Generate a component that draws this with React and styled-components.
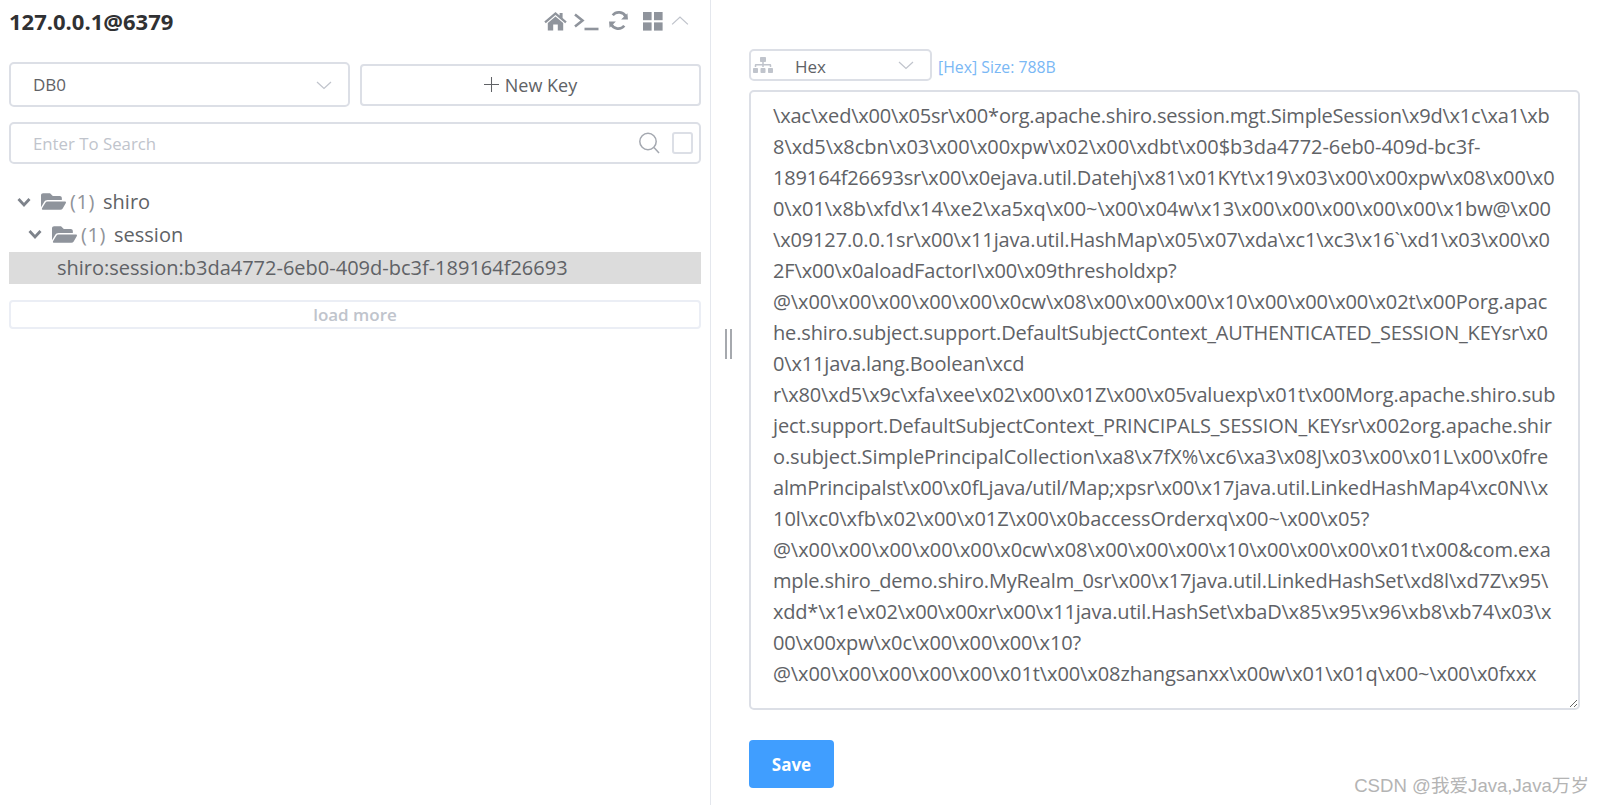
import React from "react";
import styled, { createGlobalStyle } from "styled-components";
import { FaFolderOpen, FaSitemap } from "react-icons/fa";

const Global = createGlobalStyle`
  html, body { margin: 0; padding: 0; background: #fff; }
  body { font-family: "Open Sans", "Noto Sans", sans-serif; overflow: hidden; }
`;

const Page = styled.div`
  position: relative;
  display: flex;
  width: 1602px;
  height: 805px;
  overflow: hidden;
  color: #606266;
`;
const Aside = styled.aside`
  position: relative;
  box-sizing: border-box;
  width: 711px;
  height: 805px;
  padding: 0 9px 0 9px;
  border-right: 1px solid #e4e7ed;
`;
const Handle = styled.div`
  position: absolute;
  right: -22px;
  top: 329px;
  width: 3px;
  height: 30px;
  border-left: 2px solid #a6a9ae;
  border-right: 2px solid #a6a9ae;
  background: #fff;
`;
const Header = styled.header`
  display: flex;
  align-items: center;
  justify-content: space-between;
  height: 43px;
`;
const Title = styled.h1`
  margin: 0 0 2px;
  font-size: 22px;
  font-weight: 700;
  color: #303133;
`;
const Tools = styled.div`
  display: flex;
  align-items: center;
  padding-right: 12px;
  margin-bottom: 2px;
  color: #8f949c;
`;
const Tool = styled.span`
  display: flex;
  margin-left: ${(p) => p.$gap || 0}px;
`;
const Row = styled.div`
  display: grid;
  grid-template-columns: 1fr 1fr;
  gap: 10px;
  align-items: center;
  margin-top: 19px;
`;
const Select = styled.div`
  box-sizing: border-box;
  width: ${(p) => p.$width || "auto"};
  height: ${(p) => p.$height};
  display: flex;
  align-items: center;
  padding: 0 16px 0 22px;
  justify-content: space-between;
  border: 2px solid #dcdfe6;
  border-radius: 5px;
  font-size: 17px;
  color: #606266;
`;
const NewKey = styled.div`
  box-sizing: border-box;
  height: 42px;
  display: flex;
  align-items: center;
  justify-content: center;
  gap: 6px;
  border: 2px solid #dcdfe6;
  border-radius: 4px;
  font-size: 18px;
  font-weight: 500;
  color: #606266;
`;
const Search = styled.div`
  box-sizing: border-box;
  height: 42px;
  margin-top: 15px;
  display: flex;
  align-items: center;
  gap: 11px;
  padding: 0 6px 0 22px;
  border: 2px solid #dcdfe6;
  border-radius: 5px;
`;
const Placeholder = styled.span`
  flex: 1;
  font-size: 16.8px;
  color: #c0c4cc;
`;
const CheckBox = styled.span`
  width: 17px;
  height: 18px;
  border: 2px solid #dcdfe6;
  border-radius: 3px;
`;
const Tree = styled.div`
  margin-top: 21px;
`;
const TreeRow = styled.div`
  box-sizing: border-box;
  display: flex;
  align-items: center;
  height: ${(p) => p.$h}px;
  padding-left: ${(p) => p.$indent}px;
  padding-bottom: ${(p) => p.$lift || 0}px;
  font-size: 20px;
  color: #606266;
  background: ${(p) => (p.$active ? "#dcdcdc" : "transparent")};
`;
const Count = styled.span`
  color: #909399;
  margin: 0 8px 0 4px;
  letter-spacing: 0.6px;
`;
const Folder = styled(FaFolderOpen)`
  color: #8f949c;
  font-size: 25px;
  margin-left: 10px;
`;
const LoadMore = styled.div`
  box-sizing: border-box;
  height: 29px;
  margin-top: 16px;
  display: flex;
  align-items: center;
  justify-content: center;
  border: 2px solid #ebeef5;
  border-radius: 4px;
  font-size: 17px;
  font-weight: 600;
  color: #c0c4cc;
`;
const Main = styled.main`
  box-sizing: border-box;
  flex: 1;
  padding: 49px 22px 0 38px;
`;
const TypeRow = styled.div`
  display: flex;
  align-items: center;
  gap: 6px;
  height: 32px;
`;
const TypeIcon = styled(FaSitemap)`
  color: #c0c4cc;
  font-size: 20px;
  margin-left: -20px;
`;
const TypeText = styled.span`
  flex: 1;
  margin-left: 22px;
  padding-top: 2px;
`;
const Size = styled.span`
  padding-top: 3px;
  font-size: 15.8px;
  color: #7ab8f5;
`;
const Value = styled.div`
  box-sizing: border-box;
  height: 620px;
  margin-top: 9px;
  padding: 8px 10px 0 22px;
  border: 2px solid #dcdfe6;
  border-radius: 5px;
  overflow: auto;
  resize: vertical;
  font-size: 20px;
  line-height: 31px;
  color: #606266;
`;
const Line = styled.div`
  white-space: pre;
  letter-spacing: ${(p) => p.$ls}px;
`;
const Save = styled.button`
  display: block;
  width: 85px;
  height: 48px;
  margin-top: 30px;
  border: 0;
  border-radius: 4px;
  background: #409eff;
  color: #fff;
  font: 700 17px "Open Sans", sans-serif;
`;
const Watermark = styled.div`
  position: absolute;
  right: 13px;
  bottom: 8px;
  font-family: "Liberation Sans", "Noto Sans CJK SC", sans-serif;
  font-size: 18.6px;
  color: #b4b4b4;
`;

const Chevron = ({ up, size = 16, color = "#c0c4cc", w = 1.2 }) => (
  <svg width={size} height={size} viewBox="0 0 16 16" fill="none" stroke={color} strokeWidth={w}>
    <path d={up ? "M1 11 8 4.5 15 11" : "M1 5 8 11.5 15 5"} />
  </svg>
);
const Home = () => (
  <svg width="23" height="20" viewBox="0 0 23 20" fill="#8f949c">
    <path d="M11.5 1 0.3 10.4 1.8 12.2 11.5 4.1 21.2 12.2 22.7 10.4 18.6 7V2H15.6V4.5Z" />
    <path d="M11.5 5.6 3.8 12V19.5H9.2V13.6H13.8V19.5H19.2V12Z" />
  </svg>
);
const Terminal = () => (
  <svg width="25" height="20" viewBox="0 0 25 20" fill="none" stroke="#8f949c" strokeWidth="2.6">
    <path d="M1 3.5 8.5 9.5 1 15.5" />
    <path d="M10.5 18H24.5" />
  </svg>
);
const Refresh = () => (
  <svg width="21" height="21" viewBox="0 0 20 20" fill="none" stroke="#8f949c" strokeWidth="2.6">
    <path d="M3 13.5A7.5 7.5 0 0 0 15.5 15" />
    <path d="M17 6.5A7.5 7.5 0 0 0 4.5 5" />
    <path d="M1 11h6.5L1.5 17z M19 9h-6.5l6-6z" fill="#8f949c" stroke="none" />
  </svg>
);
const Grid = () => (
  <svg width="20" height="20" viewBox="0 0 20 20" fill="#8f949c">
    <rect x="0" y="1" width="8.6" height="8.2" />
    <rect x="11" y="1" width="8.6" height="8.2" />
    <rect x="0" y="11.4" width="8.6" height="8.2" />
    <rect x="11" y="11.4" width="8.6" height="8.2" />
  </svg>
);
const Magnifier = () => (
  <svg width="24" height="24" viewBox="0 0 24 24" fill="none" stroke="#a4a8b0" strokeWidth="1.5">
    <circle cx="11" cy="10.5" r="8.2" />
    <path d="M17 16.5 22 22" />
  </svg>
);
const Caret = () => (
  <svg width="14" height="14" viewBox="0 0 14 14" fill="none" stroke="#7e838b" strokeWidth="2.8">
    <path d="M1.5 4 7 10 12.5 4" />
  </svg>
);
const Plus = () => (
  <svg width="15" height="15" viewBox="0 0 16 16" stroke="#606266" strokeWidth="1.1">
    <path d="M8 0v16M0 8h16" />
  </svg>
);

const lines = [
  ["\\xac\\xed\\x00\\x05sr\\x00*org.apache.shiro.session.mgt.SimpleSession\\x9d\\x1c\\xa1\\xb", -0.2],
  ["8\\xd5\\x8cbn\\x03\\x00\\x00xpw\\x02\\x00\\xdbt\\x00$b3da4772-6eb0-409d-bc3f-", -0.05],
  ["189164f26693sr\\x00\\x0ejava.util.Datehj\\x81\\x01KYt\\x19\\x03\\x00\\x00xpw\\x08\\x00\\x0", -0.15],
  ["0\\x01\\x8b\\xfd\\x14\\xe2\\xa5xq\\x00~\\x00\\x04w\\x13\\x00\\x00\\x00\\x00\\x00\\x1bw@\\x00", -0.07],
  ["\\x09127.0.0.1sr\\x00\\x11java.util.HashMap\\x05\\x07\\xda\\xc1\\xc3\\x16`\\xd1\\x03\\x00\\x0", -0.15],
  ["2F\\x00\\x0aloadFactorI\\x00\\x09thresholdxp?", -0.15],
  ["@\\x00\\x00\\x00\\x00\\x00\\x0cw\\x08\\x00\\x00\\x00\\x10\\x00\\x00\\x00\\x02t\\x00Porg.apac", -0.1],
  ["he.shiro.subject.support.DefaultSubjectContext_AUTHENTICATED_SESSION_KEYsr\\x0", -0.16],
  ["0\\x11java.lang.Boolean\\xcd", -0.16],
  ["r\\x80\\xd5\\x9c\\xfa\\xee\\x02\\x00\\x01Z\\x00\\x05valuexp\\x01t\\x00Morg.apache.shiro.sub", -0.15],
  ["ject.support.DefaultSubjectContext_PRINCIPALS_SESSION_KEYsr\\x002org.apache.shir", -0.15],
  ["o.subject.SimplePrincipalCollection\\xa8\\x7fX%\\xc6\\xa3\\x08J\\x03\\x00\\x01L\\x00\\x0fre", -0.1],
  ["almPrincipalst\\x00\\x0fLjava/util/Map;xpsr\\x00\\x17java.util.LinkedHashMap4\\xc0N\\\\x", -0.15],
  ["10l\\xc0\\xfb\\x02\\x00\\x01Z\\x00\\x0baccessOrderxq\\x00~\\x00\\x05?", -0.06],
  ["@\\x00\\x00\\x00\\x00\\x00\\x0cw\\x08\\x00\\x00\\x00\\x10\\x00\\x00\\x00\\x01t\\x00&com.exa", -0.06],
  ["mple.shiro_demo.shiro.MyRealm_0sr\\x00\\x17java.util.LinkedHashSet\\xd8l\\xd7Z\\x95\\", -0.17],
  ["xdd*\\x1e\\x02\\x00\\x00xr\\x00\\x11java.util.HashSet\\xbaD\\x85\\x95\\x96\\xb8\\xb74\\x03\\x", -0.19],
  ["00\\x00xpw\\x0c\\x00\\x00\\x00\\x10?", -0.13],
  ["@\\x00\\x00\\x00\\x00\\x00\\x01t\\x00\\x08zhangsanxx\\x00w\\x01\\x01q\\x00~\\x00\\x0fxxx", -0.09],
];

export default function App() {
  return (
    <Page>
      <Global />
      <Aside>
        <Header>
          <Title>127.0.0.1@6379</Title>
          <Tools>
            <Tool><Home /></Tool>
            <Tool $gap={7}><Terminal /></Tool>
            <Tool $gap={9}><Refresh /></Tool>
            <Tool $gap={14}><Grid /></Tool>
            <Tool $gap={8}><Chevron up size={18} /></Tool>
          </Tools>
        </Header>
        <Row>
          <Select $height="45px">
            DB0
            <Chevron />
          </Select>
          <NewKey>
            <Plus />
            New Key
          </NewKey>
        </Row>
        <Search>
          <Placeholder>Enter To Search</Placeholder>
          <Magnifier />
          <CheckBox />
        </Search>
        <Tree>
          <TreeRow $h={33} $indent={8}>
            <Caret />
            <Folder />
            <Count>(1)</Count>shiro
          </TreeRow>
          <TreeRow $h={34} $indent={19} $lift={2}>
            <Caret />
            <Folder />
            <Count>(1)</Count>session
          </TreeRow>
          <TreeRow $h={32} $indent={48} $lift={2} $active>
            shiro:session:b3da4772-6eb0-409d-bc3f-189164f26693
          </TreeRow>
        </Tree>
        <LoadMore>load more</LoadMore>
        <Handle />
      </Aside>
      <Main>
        <TypeRow>
          <Select $width="183px" $height="32px">
            <TypeIcon />
            <TypeText>Hex</TypeText>
            <Chevron />
          </Select>
          <Size>[Hex] Size: 788B</Size>
        </TypeRow>
        <Value>
          {lines.map(([text, ls], i) => (
            <Line key={i} $ls={ls}>
              {text}
            </Line>
          ))}
        </Value>
        <Save>Save</Save>
      </Main>
      <Watermark>CSDN @我爱Java,Java万岁</Watermark>
    </Page>
  );
}
